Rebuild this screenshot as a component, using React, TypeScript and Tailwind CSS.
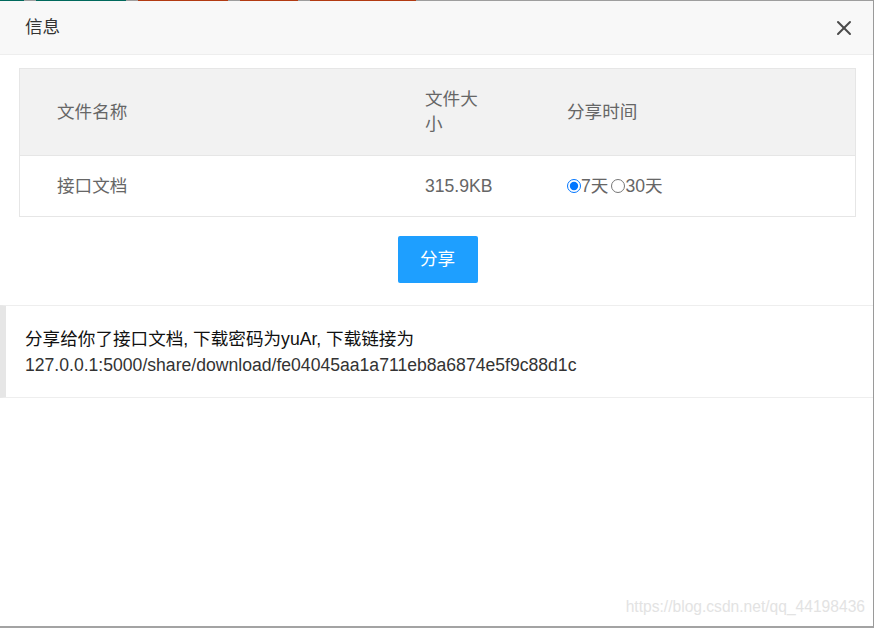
import { X } from "lucide-react";

const font = { fontFamily: '"Liberation Sans", "Noto Sans CJK SC", sans-serif' };

export default function App() {
  return (
    <div
      className="relative flex h-[628px] w-[874px] flex-col overflow-hidden border-r border-b-2 border-r-[#9a9a9a] border-b-[#a3a3a3] bg-white"
      style={font}
    >
      {/* coloured tab strip at top */}
      <div className="flex h-px w-full">
        <div className="w-[24px] bg-[#00695c]" />
        <div className="w-[12px] bg-[#9e9e9e]" />
        <div className="w-[90px] bg-[#00695c]" />
        <div className="w-[12px] bg-[#9e9e9e]" />
        <div className="w-[90px] bg-[#b23a12]" />
        <div className="w-[12px] bg-[#9e9e9e]" />
        <div className="w-[58px] bg-[#b23a12]" />
        <div className="w-[12px] bg-[#9e9e9e]" />
        <div className="w-[106px] bg-[#b23a12]" />
        <div className="flex-1 bg-[#9e9e9e]" />
      </div>

      <div className="flex h-[54px] items-center justify-between border-b border-[#eeeeee] bg-[#f8f8f8] pl-[25px] pr-[17px]">
        <span className="text-[17.6px] text-[#333]">信息</span>
        <X className="h-[24px] w-[24px] text-[#4a4a4a]" strokeWidth={2} />
      </div>

      <div className="pl-[19px] pr-[17px] pt-[13px]">
        <div className="border border-[#e6e6e6] text-[17.6px] text-[#666]">
          <div className="flex h-[86px] items-center bg-[#f2f2f2]">
            <div className="w-[368px] pl-[37px]">文件名称</div>
            <div className="w-[142px] pl-[37px] leading-[25px]">
              文件大
              <br />小
            </div>
            <div className="flex-1 pl-[37px]">分享时间</div>
          </div>
          <div className="flex h-[61px] items-center border-t border-[#e6e6e6]">
            <div className="w-[368px] pl-[37px]">接口文档</div>
            <div className="w-[142px] pl-[37px]">315.9KB</div>
            <div className="flex flex-1 items-center pl-[37px]">
              <label className="flex items-center">
                <input type="radio" name="days" defaultChecked className="m-0 h-[14px] w-[14px] accent-[#0075ff]" />
                <span>7天</span>
              </label>
              <label className="ml-[3px] flex items-center">
                <input type="radio" name="days" className="m-0 h-[14px] w-[14px]" />
                <span>30天</span>
              </label>
            </div>
          </div>
        </div>
      </div>

      <div className="flex justify-center pt-[19px] pl-[2px]">
        <button className="h-[47px] w-[80px] rounded-[2px] bg-[#1e9fff] text-[17.6px] text-white">分享</button>
      </div>

      <div className="mt-[22px] border-y border-l-[6px] border-y-[#eeeeee] border-l-[#e6e6e6] pt-[20px] pb-[19px] pl-[19px] text-[17.6px] leading-[26px]">
        <div className="text-[#111]">分享给你了接口文档, 下载密码为yuAr, 下载链接为</div>
        <div className="text-[#333]">127.0.0.1:5000/share/download/fe04045aa1a711eb8a6874e5f9c88d1c</div>
      </div>

      <div className="absolute bottom-[8px] right-[8px] text-[15.6px] text-[#e3e3e3]">
        https://blog.csdn.net/qq_44198436
      </div>
    </div>
  );
}
